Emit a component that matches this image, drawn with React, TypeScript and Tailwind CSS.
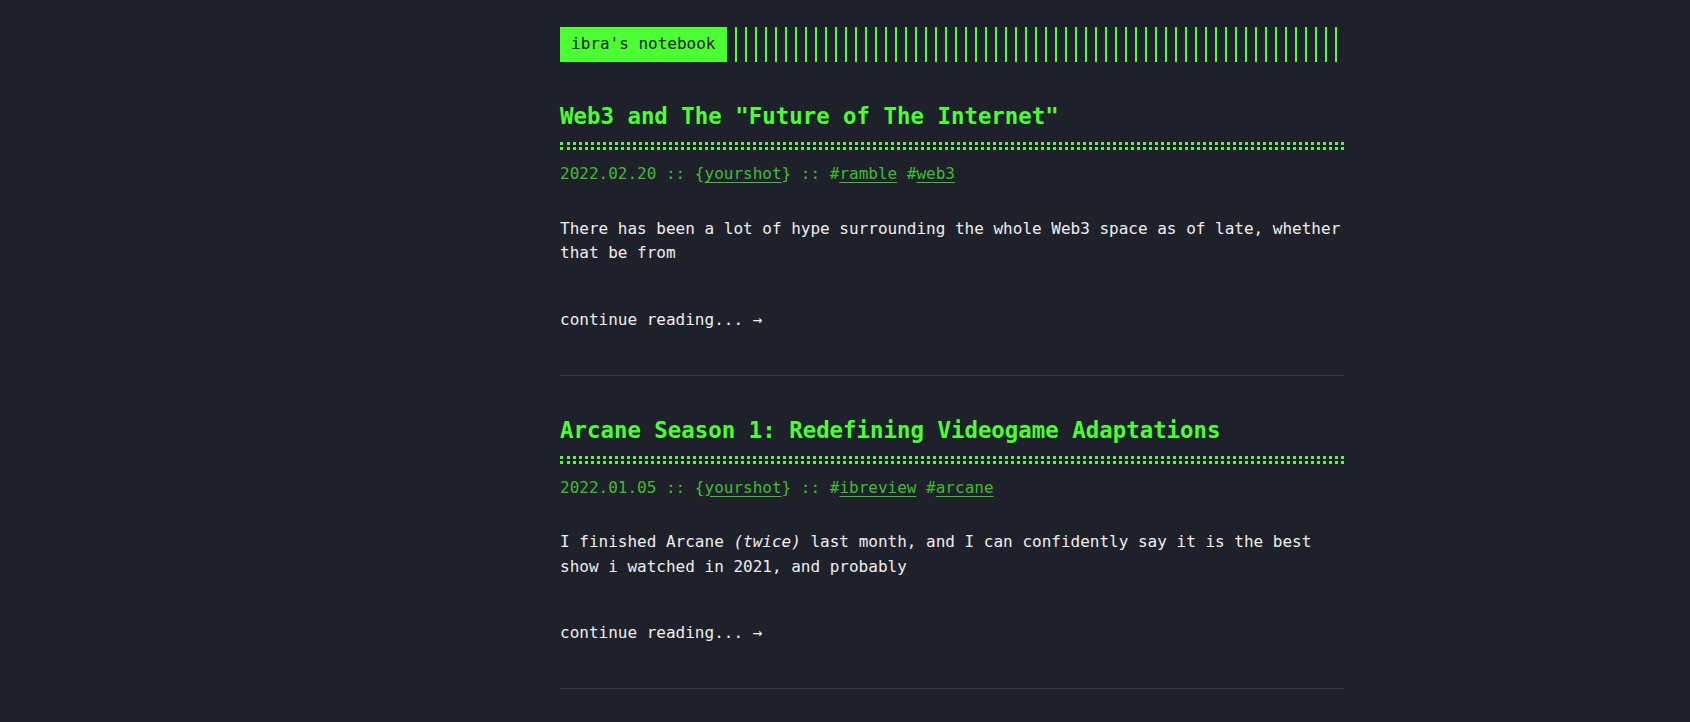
const posts = [
  {
    title: 'Web3 and The "Future of The Internet"',
    date: "2022.02.20",
    author: "yourshot",
    tags: ["ramble", "web3"],
    body: (
      <>
        There has been a lot of hype surrounding the whole Web3 space as of late, whether
        that be from
      </>
    ),
  },
  {
    title: "Arcane Season 1: Redefining Videogame Adaptations",
    date: "2022.01.05",
    author: "yourshot",
    tags: ["ibreview", "arcane"],
    body: (
      <>
        I finished Arcane <em>(twice)</em> last month, and I can confidently say it is the best
        show i watched in 2021, and probably
      </>
    ),
  },
];

function Header() {
  return (
    <header className="flex h-[35px] items-stretch">
      <a
        href="#"
        className="block bg-[#4cff33] px-[11px] py-[5px] text-[16px] leading-[24.64px] text-[#1f212a]"
      >
        ibra's notebook
      </a>
      <div className="ml-[8px] flex-1 bg-[repeating-linear-gradient(90deg,#4cff33_0,#4cff33_2px,transparent_2px,transparent_10px)]" />
    </header>
  );
}

function Post({ post }: { post: (typeof posts)[number] }) {
  return (
    <article className="border-b border-white/10 pt-[40px] pb-[42px]">
      <h1 className="text-[22.4px] font-bold leading-[29px] text-[#4cff33]">
        <a href="#">{post.title}</a>
      </h1>
      <div className="mt-[11px] border-t-[3px] border-dotted border-[#4cff33]" />
      <div className="mt-[2px] border-t-[3px] border-dotted border-[#4cff33]" />

      <div className="mt-[12px] text-[16px] leading-[24.64px] text-[#3ebd30]">
        {post.date} :: {"{"}
        <a href="#" className="underline underline-offset-[3px]">
          {post.author}
        </a>
        {"}"} ::{" "}
        {post.tags.map((t, i) => (
          <span key={t}>
            {i > 0 && " "}#
            <a href="#" className="underline underline-offset-[3px]">
              {t}
            </a>
          </span>
        ))}
      </div>

      <p className="mt-[30px] text-[16px] leading-[24.64px] text-[#eeeeee]">{post.body}</p>

      <div className="mt-[42px] text-[16px] leading-[24.64px] text-[#eeeeee]">
        <a href="#">continue reading... →</a>
      </div>
    </article>
  );
}

export default function App() {
  return (
    <div
      className="min-h-screen bg-[#1f212a] pt-[27px] pb-10 text-[#eeeeee]"
      style={{ fontFamily: '"DejaVu Sans Mono", "Liberation Mono", monospace' }}
    >
      <div className="ml-[560px] w-[784px]">
        <Header />
        <main>
          {posts.map((p) => (
            <Post key={p.date} post={p} />
          ))}
        </main>
      </div>
    </div>
  );
}
